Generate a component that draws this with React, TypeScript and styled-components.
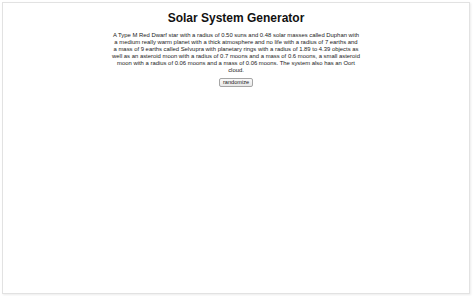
import styled, { createGlobalStyle } from "styled-components";

const GlobalStyle = createGlobalStyle`
	html, body {
		margin: 0;
		padding: 0;
		background: #fff;
	}
	body {
		font-family: "Liberation Sans", Arial, sans-serif;
		color: #111;
	}
`;

const Frame = styled.div`
	box-sizing: border-box;
	margin: 2px 4px 2px 2px;
	height: 292px;
	border: 1px solid #e2e2e2;
	box-shadow: 1px 1px 2px rgba(0, 0, 0, 0.08);
	display: flex;
	flex-direction: column;
	align-items: center;
	padding-top: 8px;
`;

const Title = styled.h1`
	margin: 0;
	font-size: 12px;
	line-height: 14px;
	font-weight: 700;
	color: #111;
`;

const Description = styled.p`
	margin: 7px 0 0;
	width: 248px;
	font-size: 5.9px;
	line-height: 7px;
	text-align: center;
	color: #222;
`;

const RandomButton = styled.button`
	margin-top: 4px;
	height: 9px;
	padding: 0 3px;
	font-family: "Liberation Sans", Arial, sans-serif;
	font-size: 5.6px;
	line-height: 7px;
	color: #222;
	background: linear-gradient(#fafafa, #e8e8e8);
	border: 1px solid #a5a5a5;
	border-radius: 2px;
	cursor: pointer;
`;

const description =
	"A Type M Red Dwarf star with a radius of 0.50 suns and 0.48 solar masses called Duphan with a medium really warm planet with a thick atmosphere and no life with a radius of 7 earths and a mass of 9 earths called Selvupra with planetary rings with a radius of 1.89 to 4.39 objects as well as an asteroid moon with a radius of 0.7 moons and a mass of 0.6 moons, a small asteroid moon with a radius of 0.06 moons and a mass of 0.06 moons. The system also has an Oort cloud.";

export default function App() {
	return (
		<>
			<GlobalStyle />
			<Frame>
				<Title>Solar System Generator</Title>
				<Description>{description}</Description>
				<RandomButton>randomize</RandomButton>
			</Frame>
		</>
	);
}
